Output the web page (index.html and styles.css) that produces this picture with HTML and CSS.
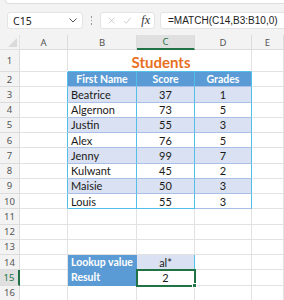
FILE: index.html
```html
<!DOCTYPE html>
<html lang="en">

<head>
    <meta charset="UTF-8" />
    <meta name="viewport" content="width=device-width, initial-scale=1.0" />
    <title>Students - MATCH</title>
    <link rel="stylesheet" href="styles.css">
</head>

<body>
    <div class="ribbonEnd"></div>

    <div class="formulaBar">
        <div class="nameBox">
            <span>C15</span>
            <svg class="chevron" width="8" height="5" viewBox="0 0 8 5">
                <path d="M0.5 0.5 L4 4 L7.5 0.5" fill="none" stroke="#555" stroke-width="1" />
            </svg>
        </div>
        <div class="dots"><i></i><i></i><i></i></div>
        <div class="fnButtons">
            <svg width="9" height="9" viewBox="0 0 9 9">
                <path d="M1 1 L8 8 M8 1 L1 8" stroke="#c4c4c4" stroke-width="1" />
            </svg>
            <svg width="10" height="9" viewBox="0 0 10 9">
                <path d="M1 5 L4 8 L9.5 1" fill="none" stroke="#c4c4c4" stroke-width="1" />
            </svg>
            <span class="fx">fx</span>
        </div>
        <div class="formula">=MATCH(C14,B3:B10,0)</div>
    </div>

    <div class="sheet">
        <div class="corner"><span class="tri"></span></div>
        <div class="colh">A</div>
        <div class="colh">B</div>
        <div class="colh colSel">C</div>
        <div class="colh">D</div>
        <div class="colh">E</div>

        <div class="rowh">1</div>
        <div class="c"></div>
        <div class="c title">Students</div>
        <div class="c"></div>

        <div class="rowh">2</div>
        <div class="c edge"></div>
        <div class="c hd vl">First Name</div>
        <div class="c hd mid vl">Score</div>
        <div class="c hd mid vl">Grades</div>
        <div class="c"></div>

        <div class="rowh">3</div>
        <div class="c edge"></div>
        <div class="c band vl">Beatrice</div>
        <div class="c band mid vl">37</div>
        <div class="c band mid vl">1</div>
        <div class="c"></div>

        <div class="rowh">4</div>
        <div class="c edge"></div>
        <div class="c vl">Algernon</div>
        <div class="c mid vl">73</div>
        <div class="c mid vl">5</div>
        <div class="c"></div>

        <div class="rowh">5</div>
        <div class="c edge"></div>
        <div class="c band vl">Justin</div>
        <div class="c band mid vl">55</div>
        <div class="c band mid vl">3</div>
        <div class="c"></div>

        <div class="rowh">6</div>
        <div class="c edge"></div>
        <div class="c vl">Alex</div>
        <div class="c mid vl">76</div>
        <div class="c mid vl">5</div>
        <div class="c"></div>

        <div class="rowh">7</div>
        <div class="c edge"></div>
        <div class="c band vl">Jenny</div>
        <div class="c band mid vl">99</div>
        <div class="c band mid vl">7</div>
        <div class="c"></div>

        <div class="rowh">8</div>
        <div class="c edge"></div>
        <div class="c vl">Kulwant</div>
        <div class="c mid vl">45</div>
        <div class="c mid vl">2</div>
        <div class="c"></div>

        <div class="rowh">9</div>
        <div class="c edge"></div>
        <div class="c band vl">Maisie</div>
        <div class="c band mid vl">50</div>
        <div class="c band mid vl">3</div>
        <div class="c"></div>

        <div class="rowh">10</div>
        <div class="c edge"></div>
        <div class="c vl last">Louis</div>
        <div class="c mid vl last">55</div>
        <div class="c mid vl">3</div>
        <div class="c"></div>

        <div class="rowh">11</div>
        <div class="c"></div>
        <div class="c"></div>
        <div class="c"></div>
        <div class="c"></div>
        <div class="c"></div>

        <div class="rowh">12</div>
        <div class="c"></div>
        <div class="c"></div>
        <div class="c"></div>
        <div class="c"></div>
        <div class="c"></div>

        <div class="rowh">13</div>
        <div class="c"></div>
        <div class="c"></div>
        <div class="c"></div>
        <div class="c"></div>
        <div class="c"></div>

        <div class="rowh">14</div>
        <div class="c"></div>
        <div class="c lookLabel">Lookup value</div>
        <div class="c lookValue">al*</div>
        <div class="c"></div>
        <div class="c"></div>

        <div class="rowh rowSel">15</div>
        <div class="c"></div>
        <div class="c lookLabel">Result</div>
        <div class="c mid active">2<span class="handle"></span></div>
        <div class="c"></div>
        <div class="c"></div>

        <div class="rowh">16</div>
        <div class="c"></div>
        <div class="c"></div>
        <div class="c"></div>
        <div class="c"></div>
        <div class="c"></div>
    </div>
</body>

</html>
```

FILE: styles.css
```css
* {
    box-sizing: border-box;
}

body {
    margin: 0;
    width: 284px;
    height: 300px;
    overflow: hidden;
    background-color: #f3f3f3;
    font-family: "Noto Sans", "Liberation Sans", sans-serif;
}

.ribbonEnd {
    height: 4px;
    margin: 0 -4px 0 5px;
    background-color: #ffffff;
    border: 1px solid #dedede;
    border-top: 0;
    border-radius: 0 0 5px 5px;
}

/* formula bar */

.formulaBar {
    display: flex;
    align-items: center;
    height: 31px;
    padding: 4px 0 2px 7px;
}

.nameBox,
.fnButtons,
.formula {
    height: 17px;
    background-color: #ffffff;
    border: 1px solid #e4e4e4;
    border-radius: 3px;
    display: flex;
    align-items: center;
}

.nameBox {
    width: 76px;
    padding: 0 5px 0 5px;
    justify-content: space-between;
    font-size: 10.5px;
    color: #222;
}

.dots {
    width: 17px;
    display: flex;
    flex-direction: column;
    align-items: center;
    gap: 2px;
}

.dots i {
    display: block;
    width: 1.5px;
    height: 1.5px;
    background-color: #999;
}

.fnButtons {
    width: 55px;
    padding: 0 4px 0 7px;
    gap: 8px;
}

.fx {
    font-family: "Liberation Serif", serif;
    font-style: italic;
    font-size: 12px;
    color: #333;
    margin-left: 2px;
}

.formula {
    flex: 1;
    margin-left: 5px;
    margin-right: -4px;
    padding-left: 7px;
    font-family: "Liberation Sans", sans-serif;
    font-size: 10px;
    color: #222;
}

/* grid */

.sheet {
    display: grid;
    grid-template-columns: 20px 48px 69px 58px 57px 32px;
    grid-template-rows: 15px 22px repeat(15, 15.25px);
    background-color: #ffffff;
    font-family: Lato, "Liberation Sans", sans-serif;
    font-size: 11px;
    color: #1a1a1a;
}

.sheet > div {
    display: flex;
    align-items: center;
    white-space: nowrap;
    overflow: visible;
    border-right: 1px solid #e2e2e2;
    border-bottom: 1px solid #e2e2e2;
    position: relative;
}

.corner {
    background-color: #f3f3f3;
}

.tri {
    position: absolute;
    right: 2px;
    bottom: 2px;
    width: 0;
    height: 0;
    border-left: 9px solid transparent;
    border-bottom: 9px solid #dadada;
}

.colh,
.rowh {
    justify-content: center;
    background-color: #f3f3f3;
    font-family: "Noto Sans", sans-serif;
    font-size: 9.5px;
    color: #555;
    border-color: #dcdcdc !important;
}

.colSel {
    background-color: #e0e0e0;
    border-bottom: 2px solid #217346 !important;
    color: #217346;
}

.rowSel {
    background-color: #e0e0e0;
    border-right: 2px solid #217346 !important;
    color: #217346;
}

.c {
    padding-left: 3px;
}

.mid {
    justify-content: center;
    padding-left: 0;
}

.title {
    grid-column: span 3;
    justify-content: center;
    font-size: 15px;
    font-weight: bold;
    color: #e8701f;
    padding-top: 3px;
    border-bottom-color: #52bfe8 !important;
}

.edge {
    border-right-color: #52bfe8 !important;
}

.vl {
    border-right-color: #52bfe8 !important;
    border-bottom-color: #a8bfe6 !important;
}

.hd {
    background-color: #5b9bd5;
    color: #ffffff;
    font-weight: bold;
    font-size: 10.5px;
    justify-content: center;
    padding-left: 0;
}

.band {
    background-color: #d9e1f2;
}

.last {
    border-bottom-color: #52bfe8 !important;
}

.lookLabel {
    background-color: #5b9bd5;
    color: #ffffff;
    font-weight: bold;
    font-size: 10.5px;
    border-color: #5b9bd5 !important;
}

.lookValue {
    background-color: #d9e1f2;
    justify-content: center;
    padding-left: 0;
    border-right-color: #52bfe8 !important;
    border-bottom-color: #a8bfe6 !important;
}

.active {
    outline: 2px solid #217346;
    outline-offset: -1px;
    z-index: 1;
}

.handle {
    position: absolute;
    right: -3px;
    bottom: -3px;
    width: 5px;
    height: 5px;
    background-color: #217346;
    border: 1px solid #ffffff;
}
```
